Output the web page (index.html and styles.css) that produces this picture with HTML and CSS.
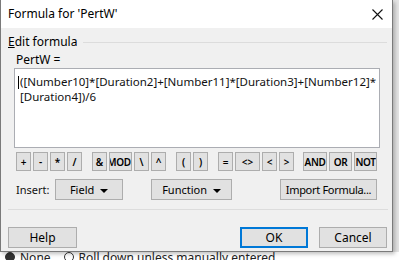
FILE: index.html
```html
<!DOCTYPE html>
<html>
<head>
<meta charset="utf-8">
<link rel="stylesheet" href="styles.css">
</head>
<body>
<div class="dialog">
  <div class="titlebar">
    <span class="title">Formula for 'PertW'</span>
    <svg class="close" width="11" height="11" viewBox="0 0 11 11"><path d="M0.5 0.5L10.5 10.5M10.5 0.5L0.5 10.5" stroke="#111" stroke-width="1.1" fill="none"/></svg>
  </div>
  <div class="body">
    <div class="legend"><span><u>E</u>dit formula</span><span class="legend-line"></span></div>
    <div class="field-label">PertW =</div>
    <div class="formula"><span class="caret"></span>([Number10]*[Duration2]+[Number11]*[Duration3]+[Number12]*<br>[Duration4])/6</div>
    <div class="ops">
      <div class="op-group">
        <button class="op">+</button><button class="op">-</button><button class="op">*</button><button class="op">/</button>
      </div>
      <div class="op-group">
        <button class="op">&amp;</button><button class="op op-mod">MOD</button><button class="op">\</button><button class="op">^</button>
      </div>
      <div class="op-group g-paren">
        <button class="op">(</button><button class="op">)</button>
      </div>
      <div class="op-group">
        <button class="op">=</button><button class="op op-ne">&lt;&gt;</button><button class="op">&lt;</button><button class="op">&gt;</button>
      </div>
      <div class="op-group g-logic">
        <button class="op op-w">AND</button><button class="op op-w2">OR</button><button class="op op-w2">NOT</button>
      </div>
    </div>
    <div class="insert-row">
      <span class="insert-label">Insert:</span>
      <button class="btn btn-field">Field <span class="tri"></span></button>
      <button class="btn btn-func">Function <span class="tri"></span></button>
      <button class="btn btn-import">Import Formula...</button>
    </div>
    <div class="sep"></div>
    <div class="footer">
      <button class="btn btn-help">Help</button>
      <div class="footer-right">
        <button class="btn btn-ok">OK</button>
        <button class="btn btn-cancel">Cancel</button>
      </div>
    </div>
  </div>
</div>
<div class="under">
  <span class="radio radio-on"></span><span class="under-text">None</span>
  <span class="radio radio-off"></span><span class="under-text">Roll down unless manually entered</span>
</div>
</body>
</html>
```
FILE: styles.css
```css
html, body {
  margin: 0;
  padding: 0;
}
html {
  background: #e4e4e4;
}
body {
  width: 399px;
  height: 260px;
  overflow: hidden;
  background: #e4e4e4;
  font-family: "Noto Sans", "Open Sans", sans-serif;
  font-size: 12px;
  color: #000;
}
.dialog {
  width: 393px;
  height: 252px;
  background: #f0f0f0;
  border-left: 1px solid #7a7a7a;
  border-right: 1px solid #7a7a7a;
  border-bottom: 1px solid #7a7a7a;
  box-sizing: border-box;
  box-shadow: 2px 2px 4px rgba(0,0,0,0.25);
  display: flex;
  flex-direction: column;
  position: relative;
  z-index: 1;
}
.titlebar {
  height: 28px;
  background: #fff;
  display: flex;
  align-items: center;
  justify-content: space-between;
  padding: 0 9px 0 7px;
  flex: none;
}
.title {
  font-size: 12px;
  line-height: 16px;
  margin-top: -1px;
}
.close {
  display: block;
}
.body {
  padding: 6px 5px 0 6px;
  display: flex;
  flex-direction: column;
}
.legend {
  display: flex;
  align-items: center;
  height: 16px;
  line-height: 16px;
  margin-left: 1px;
  font-size: 12px;
}
.legend-line {
  flex: 1;
  height: 1px;
  background: #dcdcdc;
  margin-left: 6px;
  margin-top: 1px;
}
.field-label {
  line-height: 16px;
  height: 16px;
  margin: 2px 0 0 9px;
  font-size: 12px;
}
.formula {
  margin-left: 7px;
  width: 366px;
  height: 80px;
  box-sizing: border-box;
  background: #fff;
  border: 1px solid #abadb3;
  padding: 5px 0 0 5px;
  font-size: 11.5px;
  line-height: 15px;
  white-space: nowrap;
  position: relative;
  color: #111;
}
.caret {
  position: absolute;
  left: 3px;
  top: 7px;
  width: 1px;
  height: 13px;
  background: #000;
}
.ops {
  display: flex;
  margin: 4px 0 0 9px;
  height: 19px;
}
.op-group {
  display: flex;
  gap: 2px;
  margin-right: 10px;
}
.op-group.g-logic {
  margin-left: -1px;
}
.op {
  width: 15px;
  height: 19px;
  padding: 0;
  margin: 0;
  box-sizing: border-box;
  background: #e1e1e1;
  border: 1px solid #adadad;
  font-family: "Noto Sans", sans-serif;
  font-size: 10px;
  font-weight: 600;
  line-height: 16px;
  color: #000;
  overflow: hidden;
  white-space: nowrap;
  text-align: center;
}
.op-mod {
  width: 23px;
  text-indent: -3px;
  letter-spacing: -0.4px;
}
.op-ne {
  width: 25px;
}
.op-w {
  width: 24px;
  letter-spacing: -0.4px;
}
.op-w2 {
  width: 23px;
  letter-spacing: -0.4px;
}
.insert-row {
  display: flex;
  align-items: center;
  margin: 8px 0 0 9px;
  height: 21px;
}
.insert-label {
  width: 39px;
  font-size: 11px;
  color: #111;
}
.btn {
  height: 21px;
  box-sizing: border-box;
  background: #e1e1e1;
  border: 1px solid #adadad;
  font-family: "Noto Sans", sans-serif;
  font-size: 11px;
  line-height: 17px;
  padding: 0;
  color: #000;
  white-space: nowrap;
}
.btn-field {
  width: 68px;
}
.btn-func {
  width: 81px;
  margin-left: 28px;
}
.btn-import {
  width: 97px;
  margin-left: 48px;
  letter-spacing: -0.3px;
}
.tri {
  display: inline-block;
  width: 0;
  height: 0;
  border-left: 4px solid transparent;
  border-right: 4px solid transparent;
  border-top: 4px solid #000;
  vertical-align: middle;
  margin-left: 3px;
}
.sep {
  height: 1px;
  background: #dcdcdc;
  margin: 9px 0 0 1px;
  width: 380px;
}
.footer {
  display: flex;
  justify-content: space-between;
  margin: 17px 0 0 1px;
  width: 379px;
}
.btn-help {
  width: 69px;
  font-size: 12px;
}
.footer-right {
  display: flex;
  gap: 11px;
}
.btn-ok {
  width: 68px;
  border: 2px solid #0078d7;
  line-height: 15px;
  font-size: 12px;
}
.btn-cancel {
  width: 68px;
  font-size: 12px;
}
.under {
  background: #fff;
  height: 8px;
  overflow: hidden;
  display: flex;
  align-items: flex-start;
  padding: 0 0 0 5px;
  line-height: 12px;
  color: #222;
}
.radio {
  flex: none;
  width: 10px;
  height: 10px;
  border: 1px solid #333;
  border-radius: 50%;
  box-sizing: border-box;
  margin-top: 0;
  position: relative;
}
.radio-on {
  background: #333;
}
.under-text {
  margin-left: 5px;
  margin-right: 13px;
  font-size: 12px;
  white-space: nowrap;
}
```
